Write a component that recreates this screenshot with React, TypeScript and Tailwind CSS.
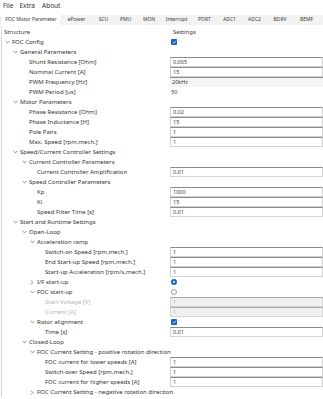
import React from "react";

type Setting =
	| { kind: "input"; value: string; disabled?: boolean; readonly?: boolean }
	| { kind: "text"; value: string }
	| { kind: "check" }
	| { kind: "radio"; on: boolean }
	| null;

type Row = {
	label: string;
	level: number;
	open?: boolean;
	disabled?: boolean;
	setting: Setting;
};

const inp = (value: string, extra: Partial<{ disabled: boolean; readonly: boolean }> = {}): Setting => ({
	kind: "input",
	value,
	...extra,
});

const ROWS: Row[] = [
	{ label: "FOC Config", level: 0, open: true, setting: { kind: "check" } },
	{ label: "General Parameters", level: 1, open: true, setting: null },
	{ label: "Shunt Resistance [Ohm]", level: 2, setting: inp("0.005") },
	{ label: "Nominal Current [A]", level: 2, setting: inp("15") },
	{ label: "PWM Frequency [Hz]", level: 2, setting: inp("20kHz", { readonly: true }) },
	{ label: "PWM Period [us]", level: 2, setting: { kind: "text", value: "50" } },
	{ label: "Motor Parameters", level: 1, open: true, setting: null },
	{ label: "Phase Resistance [Ohm]", level: 2, setting: inp("0.02") },
	{ label: "Phase Inductance [H]", level: 2, setting: inp("15") },
	{ label: "Pole Pairs", level: 2, setting: inp("1") },
	{ label: "Max. Speed [rpm,mech.]", level: 2, setting: inp("1") },
	{ label: "Speed/Current Controller Settings", level: 1, open: true, setting: null },
	{ label: "Current Controller Parameters", level: 2, open: true, setting: null },
	{ label: "Current Controller Amplification", level: 3, setting: inp("0.01") },
	{ label: "Speed Controller Parameters", level: 2, open: true, setting: null },
	{ label: "Kp", level: 3, setting: inp("1000") },
	{ label: "Ki", level: 3, setting: inp("15") },
	{ label: "Speed Filter Time [s]", level: 3, setting: inp("0.01") },
	{ label: "Start and Runtime Settings", level: 1, open: true, setting: null },
	{ label: "Open-Loop", level: 2, open: true, setting: null },
	{ label: "Acceleration ramp", level: 3, open: true, setting: null },
	{ label: "Switch-on Speed [rpm,mech.]", level: 4, setting: inp("1") },
	{ label: "End Start-up Speed [rpm,mech.]", level: 4, setting: inp("1") },
	{ label: "Start-up Acceleration [rpm/s,mech.]", level: 4, setting: inp("1") },
	{ label: "I/F start-up", level: 3, open: false, setting: { kind: "radio", on: true } },
	{ label: "FOC start-up", level: 3, open: true, setting: { kind: "radio", on: false } },
	{ label: "Start Voltage [V]", level: 4, disabled: true, setting: inp("1", { disabled: true }) },
	{ label: "Current [A]", level: 4, disabled: true, setting: inp("1", { disabled: true }) },
	{ label: "Rotor alignment", level: 3, open: true, setting: { kind: "check" } },
	{ label: "Time [s]", level: 4, setting: inp("0.01") },
	{ label: "Closed-Loop", level: 2, open: true, setting: null },
	{ label: "FOC Current Setting - positive rotation direction", level: 3, open: true, setting: null },
	{ label: "FOC current for lower speeds [A]", level: 4, setting: inp("1") },
	{ label: "Switch-over Speed [rpm,mech.]", level: 4, setting: inp("1") },
	{ label: "FOC current for higher speeds [A]", level: 4, setting: inp("1") },
	{ label: "FOC Current Setting - negative rotation direction", level: 3, open: false, setting: null },
];

const INDENT = ["pl-[3px]", "pl-[11px]", "pl-[20px]", "pl-[28px]", "pl-[36px]"];

// tab widths taken from the label positions
const TABS = [
	{ label: "FOC Motor Parameter", w: "w-[58px]" },
	{ label: "ePower", w: "w-[33px]" },
	{ label: "SCU", w: "w-[21px]" },
	{ label: "PMU", w: "w-[23px]" },
	{ label: "MON", w: "w-[24px]" },
	{ label: "Interrupt", w: "w-[31px]" },
	{ label: "PORT", w: "w-[25px]" },
	{ label: "ADC1", w: "w-[25px]" },
	{ label: "ADC2", w: "w-[25px]" },
	{ label: "BDRV", w: "w-[26px]" },
	{ label: "BEMF", w: "w-[27px]" },
];

function Chevron({ open }: { open: boolean }) {
	return open ? (
		<svg width="5" height="4" viewBox="0 0 5 4" className="block">
			<path d="M0.6 1 L2.5 2.9 L4.4 1" fill="none" stroke="#5a5a5a" strokeWidth="0.7" />
		</svg>
	) : (
		<svg width="4" height="5" viewBox="0 0 4 5" className="block">
			<path d="M1 0.6 L2.9 2.5 L1 4.4" fill="none" stroke="#5a5a5a" strokeWidth="0.7" />
		</svg>
	);
}

function Check() {
	return (
		<div className="ml-[1px] grid h-[6px] w-[6px] place-items-center rounded-[1px] bg-[#1a66c4]">
			<svg width="5" height="4" viewBox="0 0 5 4">
				<path d="M0.8 2.1 L1.9 3.1 L4.2 0.8" fill="none" stroke="#fff" strokeWidth="0.7" />
			</svg>
		</div>
	);
}

function SettingCell({ s }: { s: Setting }) {
	if (!s) return null;
	if (s.kind === "check") return <Check />;
	if (s.kind === "radio")
		return s.on ? (
			<div className="ml-[1px] grid h-[6px] w-[6px] place-items-center rounded-full bg-[#1a66c4]">
				<div className="h-[2.5px] w-[2.5px] rounded-full bg-white" />
			</div>
		) : (
			<div className="ml-[1px] h-[6px] w-[6px] rounded-full border-[0.8px] border-[#9a9a9a] bg-white" />
		);
	if (s.kind === "text") return <div className="pl-[1px] text-[5.5px] text-[#3a3a3a]">{s.value}</div>;
	if (s.readonly)
		return (
			<div className="flex h-full w-full items-center border-t border-t-[#8a8a8a] bg-[#f4f4f4] pl-[2px] text-[5.5px] text-[#3a3a3a]">
				{s.value}
			</div>
		);
	return (
		<div
			className={
				s.disabled
					? "flex h-full w-full items-center border border-[#d6d6d6] border-t-[#a8a8a8] bg-[#f0f0f0] pl-[2px] text-[5.5px] text-[#a8a8a8]"
					: "flex h-full w-full items-center border border-[#d2d2d2] border-t-[#8a8a8a] bg-white pl-[2px] text-[5.5px] text-[#3a3a3a]"
			}
		>
			{s.value}
		</div>
	);
}

export default function App() {
	return (
		<div
			className="h-[399px] w-[323px] overflow-hidden bg-white text-[#333]"
			style={{ fontFamily: '"Noto Sans", "Open Sans", sans-serif' }}
		>
			{/* menu */}
			<div className="flex h-[11px] items-center gap-[6px] pl-[3px] text-[6.5px] text-[#333]">
				<span>File</span>
				<span>Extra</span>
				<span className="ml-[1px]">About</span>
			</div>

			{/* tabs */}
			<div className="mt-[4px] flex h-[10px] items-stretch whitespace-nowrap bg-[#f2f2f2] pl-[2px] text-[5px] text-[#3a3a3a]">
				{TABS.map((t, i) => (
					<div
						key={t.label}
						className={`flex shrink-0 items-center justify-center ${t.w} ${i === 0 ? "bg-white" : ""}`}
					>
						{t.label}
					</div>
				))}
			</div>

			{/* tree */}
			<div className="mt-[2px] ml-[1px] border-l border-[#d4d4d4]">
				<div className="grid h-[10px] grid-cols-[168px_1fr] items-end text-[6px] text-[#3a3a3a]">
					<div className="pl-[2px]">Structure</div>
					<div className="pl-[3px]">Settings</div>
				</div>
				{ROWS.map((r, i) => (
					<div key={i} className="grid h-[10px] grid-cols-[168px_1fr] items-center text-[6px]">
						<div
							className={`flex items-center whitespace-nowrap ${INDENT[r.level]} ${
								r.disabled ? "text-[#b4b4b4]" : "text-[#333]"
							}`}
						>
							<div className="flex w-[7px] shrink-0 items-center">
								{r.open !== undefined && <Chevron open={r.open} />}
							</div>
							<span>{r.label}</span>
						</div>
						<div className="flex h-full items-center">
							<SettingCell s={r.setting} />
						</div>
					</div>
				))}
			</div>
		</div>
	);
}
